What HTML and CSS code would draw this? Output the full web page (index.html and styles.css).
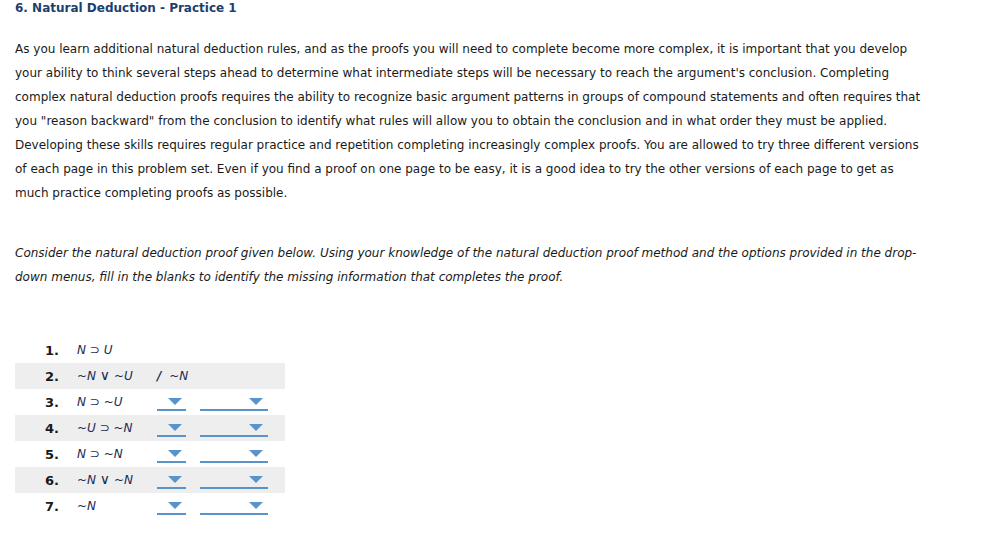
FILE: index.html
```html
<!DOCTYPE html>
<html>
<head>
<meta charset="utf-8">
<link rel="stylesheet" href="styles.css">
</head>
<body>
<div class="page">
  <h1 class="title">6. Natural Deduction - Practice 1</h1>
  <p class="intro">As you learn additional natural deduction rules, and as the proofs you will need to complete become more complex, it is important that you develop your ability to think several steps ahead to determine what intermediate steps will be necessary to reach the argument's conclusion. Completing complex natural deduction proofs requires the ability to recognize basic argument patterns in groups of compound statements and often requires that you "reason backward" from the conclusion to identify what rules will allow you to obtain the conclusion and in what order they must be applied. Developing these skills requires regular practice and repetition completing increasingly complex proofs. You are allowed to try three different versions of each page in this problem set. Even if you find a proof on one page to be easy, it is a good idea to try the other versions of each page to get as much practice completing proofs as possible.</p>
  <p class="instr">Consider the natural deduction proof given below. Using your knowledge of the natural deduction proof method and the options provided in the drop-down menus, fill in the blanks to identify the missing information that completes the proof.</p>
  <div class="proof">
    <div class="row"><span class="num">1.</span><span class="stmt">N ⊃ U</span></div>
    <div class="row alt"><span class="num">2.</span><span class="stmt">~N <span class="or">∨</span> ~U</span><span class="concl"><b>/</b> ~N</span></div>
    <div class="row"><span class="num">3.</span><span class="stmt">N ⊃ ~U</span><span class="dd small"><i class="arrow"></i></span><span class="dd wide"><i class="arrow"></i></span></div>
    <div class="row alt"><span class="num">4.</span><span class="stmt">~U ⊃ ~N</span><span class="dd small"><i class="arrow"></i></span><span class="dd wide"><i class="arrow"></i></span></div>
    <div class="row"><span class="num">5.</span><span class="stmt">N ⊃ ~N</span><span class="dd small"><i class="arrow"></i></span><span class="dd wide"><i class="arrow"></i></span></div>
    <div class="row alt"><span class="num">6.</span><span class="stmt">~N <span class="or">∨</span> ~N</span><span class="dd small"><i class="arrow"></i></span><span class="dd wide"><i class="arrow"></i></span></div>
    <div class="row"><span class="num">7.</span><span class="stmt">~N</span><span class="dd small"><i class="arrow"></i></span><span class="dd wide"><i class="arrow"></i></span></div>
  </div>
</div>
</body>
</html>
```
FILE: styles.css
```css
html, body {
  margin: 0;
  padding: 0;
  background: #ffffff;
}
.page {
  padding: 0 0 0 15px;
  width: 915px;
  font-family: "DejaVu Sans", Verdana, sans-serif;
  color: #1a1a1a;
}
.title {
  margin: 0;
  font-size: 12px;
  line-height: 16px;
  font-weight: bold;
  color: #1c3f6e;
}
.intro {
  margin: 21px 0 0 0;
  font-size: 12px;
  line-height: 24px;
}
.instr {
  margin: 36px 0 0 0;
  font-size: 12px;
  line-height: 24px;
  font-style: italic;
}
.proof {
  margin-top: 48px;
  width: 270px;
}
.row {
  display: flex;
  align-items: center;
  height: 26px;
  font-size: 12px;
}
.row.alt {
  background: #eeeeee;
}
.num {
  width: 62px;
  padding-left: 30px;
  box-sizing: border-box;
  font-weight: bold;
  font-size: 13px;
}
.stmt {
  width: 80px;
  font-style: italic;
  font-size: 12px;
  color: #1b2a52;
}
.or {
  font-style: normal;
  font-size: 14px;
  line-height: 12px;
}
.concl {
  font-style: italic;
  color: #1b2a52;
}
.concl b {
  margin-right: 4px;
}
.dd {
  position: relative;
  height: 22px;
  border-bottom: 2px solid #5a93c8;
  align-self: flex-start;
  box-sizing: border-box;
}
.dd.small {
  width: 29px;
}
.dd.wide {
  width: 68px;
  margin-left: 14px;
}
.arrow {
  position: absolute;
  right: 5px;
  top: 9px;
  width: 0;
  height: 0;
  border-left: 7px solid transparent;
  border-right: 7px solid transparent;
  border-top: 7px solid #5a93c8;
}
.dd.small .arrow {
  right: 4px;
}
```
